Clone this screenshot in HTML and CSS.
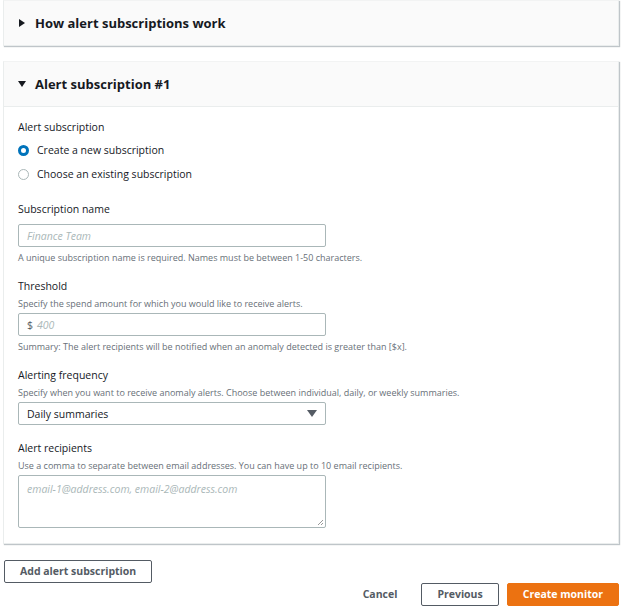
FILE: index.html
```html
<!DOCTYPE html>
<html lang="en">
<head>
  <meta charset="UTF-8">
  <title>Alert subscriptions</title>
  <link rel="stylesheet" href="styles.css">
</head>
<body>
  <div class="page">
    <!-- Collapsed info panel -->
    <div class="panel">
      <div class="panel-header collapsed">
        <span class="caret caret-right"></span>
        <h2>How alert subscriptions work</h2>
      </div>
    </div>

    <!-- Expanded subscription form -->
    <div class="panel last">
      <div class="panel-header">
        <span class="caret caret-down"></span>
        <h2>Alert subscription #1</h2>
      </div>
      <div class="panel-body">
        <div class="field">
          <div class="label tight">Alert subscription</div>
          <label class="radio checked"><span class="dot"></span>Create a new subscription</label>
          <label class="radio"><span class="dot"></span>Choose an existing subscription</label>
        </div>

        <div class="field has-hint">
          <div class="label">Subscription name</div>
          <div class="input"><span class="placeholder">Finance Team</span></div>
          <div class="hint">A unique subscription name is required. Names must be between 1-50 characters.</div>
        </div>

        <div class="field has-hint">
          <div class="label with-desc">Threshold</div>
          <div class="desc">Specify the spend amount for which you would like to receive alerts.</div>
          <div class="input"><span class="prefix">$</span><span class="placeholder">400</span></div>
          <div class="hint">Summary: The alert recipients will be notified when an anomaly detected is greater than [$x].</div>
        </div>

        <div class="field">
          <div class="label with-desc">Alerting frequency</div>
          <div class="desc">Specify when you want to receive anomaly alerts. Choose between individual, daily, or weekly summaries.</div>
          <div class="input select"><span>Daily summaries</span><span class="caret caret-down small"></span></div>
        </div>

        <div class="field">
          <div class="label with-desc">Alert recipients</div>
          <div class="desc">Use a comma to separate between email addresses. You can have up to 10 email recipients.</div>
          <div class="input textarea">
            <span class="placeholder">email-1@address.com, email-2@address.com</span>
            <svg class="grip" width="7" height="7" viewBox="0 0 7 7"><path d="M6 1 1 6M6 4 4 6" stroke="#999" stroke-width="1"/></svg>
          </div>
        </div>
      </div>
    </div>

    <div class="add-row">
      <button class="btn">Add alert subscription</button>
    </div>

    <div class="actions">
      <button class="btn link">Cancel</button>
      <button class="btn">Previous</button>
      <button class="btn primary">Create monitor</button>
    </div>
  </div>
</body>
</html>
```

FILE: styles.css
```css
body {
  margin: 0;
  background: #fff;
  color: #16191f;
  font-family: 'Open Sans', 'Noto Sans', sans-serif;
}
.page {
  width: 616px;
  padding: 0 0 0 3px;
}
.panel {
  background: #fff;
  border: 1px solid #eaeded;
  border-top-color: #f2f3f3;
  box-shadow: 1px 1px 1px rgba(0, 22, 40, 0.25);
  margin-bottom: 15px;
}
.panel.last {
  margin-bottom: 14px;
}
.panel-header {
  display: flex;
  align-items: center;
  gap: 9px;
  height: 44px;
  padding: 0 14px;
  background: #fafafa;
  border-bottom: 1px solid #eaeded;
}
.panel-header.collapsed {
  border-bottom: none;
}
.panel-header h2 {
  margin: 0;
  font-size: 13px;
  font-weight: 700;
}
.caret {
  display: inline-block;
  width: 0;
  height: 0;
}
.caret-right {
  border-top: 4px solid transparent;
  border-bottom: 4px solid transparent;
  border-left: 6px solid #16191f;
  margin: 0 1px;
}
.caret-down {
  border-left: 4px solid transparent;
  border-right: 4px solid transparent;
  border-top: 6px solid #16191f;
}
.caret-down.small {
  border-left-width: 5px;
  border-right-width: 5px;
  border-top: 7px solid #545b64;
  margin-right: 1px;
}
.panel-body {
  padding: 12px 14px 15px;
}
.field {
  margin-bottom: 15px;
}
.field.has-hint {
  margin-bottom: 14px;
}
.field:last-child {
  margin-bottom: 0;
}
.label {
  font-size: 10.5px;
  line-height: 16px;
  margin-bottom: 7px;
}
.label.tight {
  margin-bottom: 3px;
}
.label.with-desc {
  margin-bottom: 4px;
}
.desc {
  font-size: 9px;
  line-height: 12px;
  color: #687078;
  margin-bottom: 3px;
}
.hint {
  font-size: 9px;
  line-height: 12px;
  color: #687078;
  margin-top: 5px;
}
.radio {
  display: flex;
  align-items: center;
  gap: 8px;
  font-size: 10.5px;
  height: 24px;
}
.dot {
  box-sizing: border-box;
  width: 11px;
  height: 11px;
  border-radius: 50%;
  border: 1px solid #aab7b8;
}
.radio.checked .dot {
  border: 3.5px solid #0073bb;
}
.input {
  display: flex;
  align-items: center;
  gap: 4px;
  width: 291px;
  height: 21px;
  padding: 0 7px 0 8px;
  border: 1px solid #aab7b8;
  border-radius: 2px;
  font-size: 10.5px;
}
.placeholder {
  color: #aab7b8;
  font-style: italic;
}
.prefix {
  color: #545b64;
}
.select {
  justify-content: space-between;
  color: #16191f;
}
.textarea {
  position: relative;
  align-items: flex-start;
  height: 45px;
  padding-top: 6px;
}
.grip {
  position: absolute;
  right: 1px;
  bottom: 1px;
}
.add-row {
  padding: 0 0 0 1px;
}
.btn {
  font-family: 'Open Sans', 'Noto Sans', sans-serif;
  font-stretch: 90%;
  font-weight: 700;
  font-size: 10.5px;
  color: #545b64;
  background: #fff;
  border: 1px solid #545b64;
  border-radius: 2px;
  height: 23px;
  padding: 0 15px;
}
.actions {
  display: flex;
  justify-content: flex-end;
  align-items: center;
  gap: 8px;
}
.btn.link {
  border-color: transparent;
  padding: 0 15px;
}
.btn.primary {
  background: #ec7211;
  border-color: #ec7211;
  color: #fff;
}
```
